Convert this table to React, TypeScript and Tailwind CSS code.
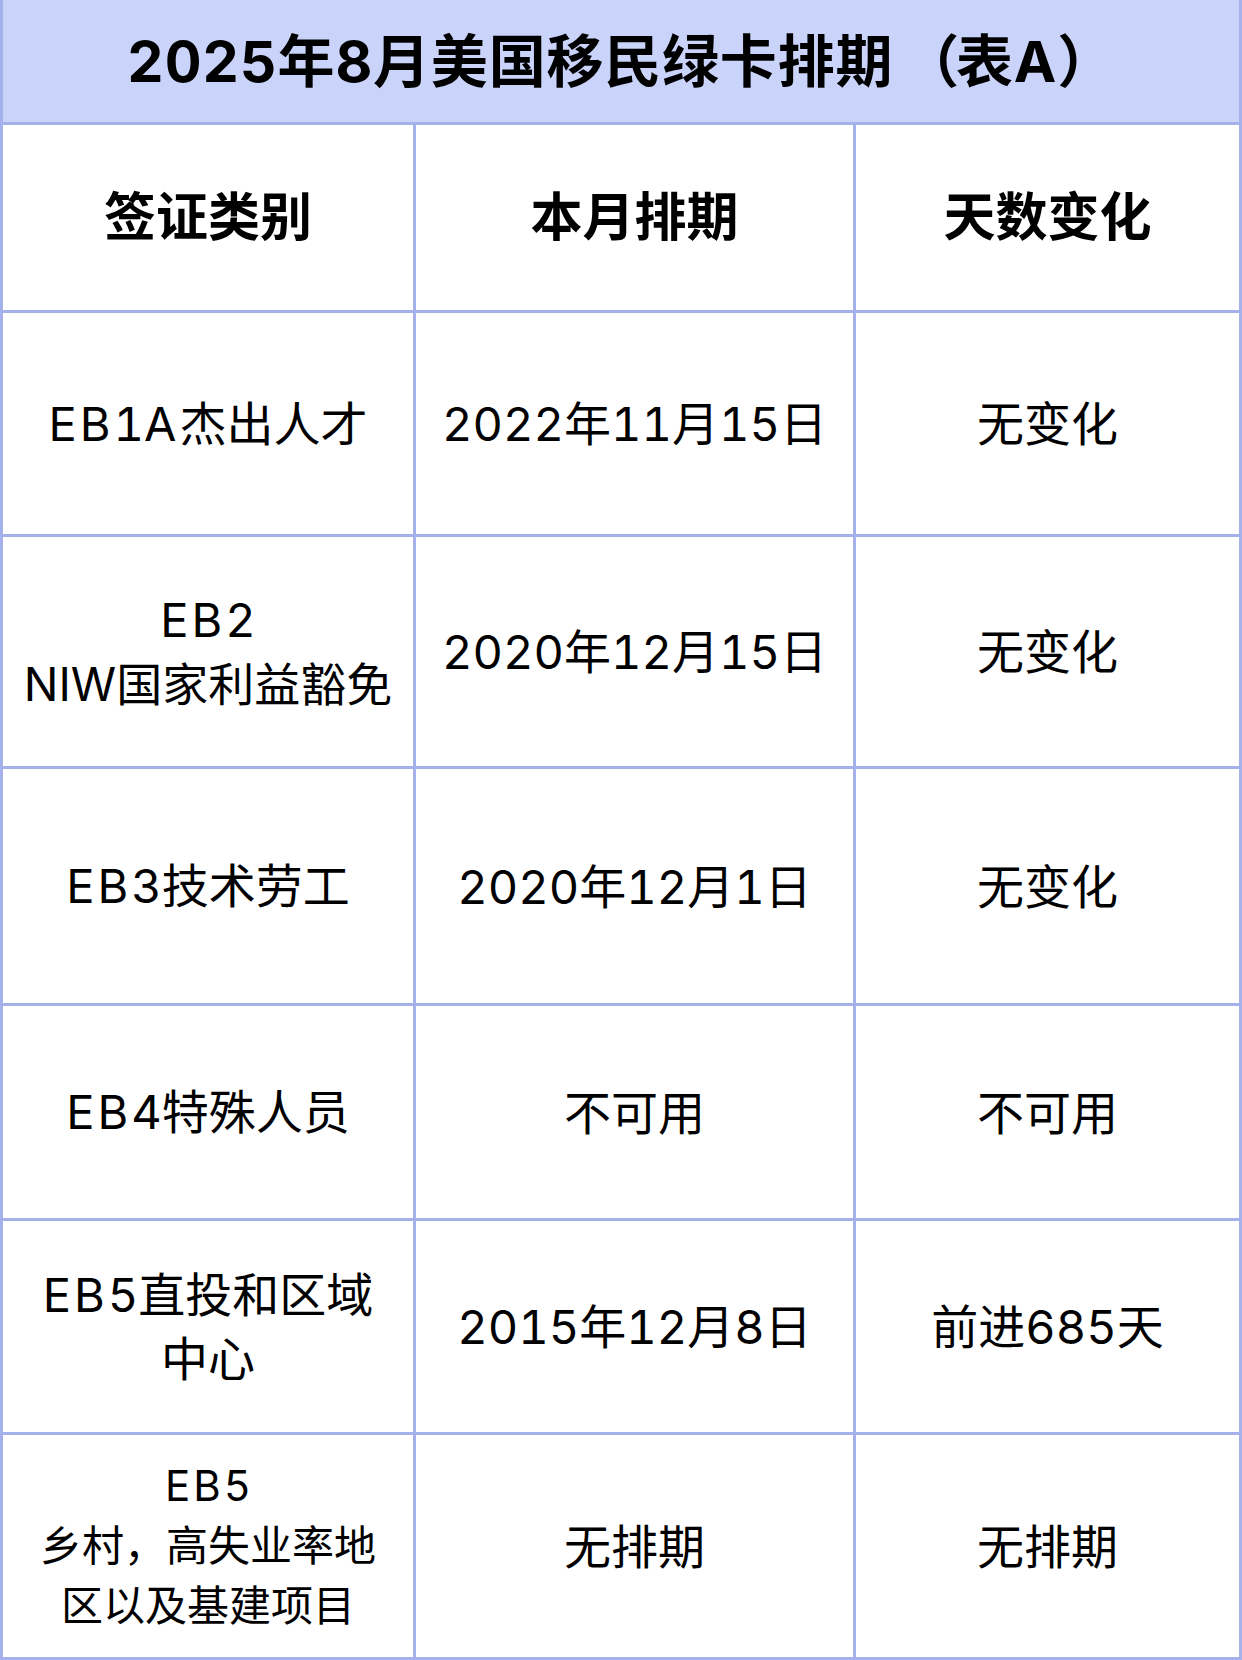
const rows: { name: string[]; date: string; change: string; h: string; small?: boolean }[] = [
  { name: ['EB1A杰出人才'], date: '2022年11月15日', change: '无变化', h: 'h-[221px]' },
  { name: ['EB2', 'NIW国家利益豁免'], date: '2020年12月15日', change: '无变化', h: 'h-[229px]' },
  { name: ['EB3技术劳工'], date: '2020年12月1日', change: '无变化', h: 'h-[234px]' },
  { name: ['EB4特殊人员'], date: '不可用', change: '不可用', h: 'h-[212px]' },
  { name: ['EB5直投和区域', '中心'], date: '2015年12月8日', change: '前进685天', h: 'h-[211px]' },
  { name: ['EB5', '乡村，高失业率地', '区以及基建项目'], date: '无排期', change: '无排期', h: 'h-[222px]', small: true },
];

const font = { fontFamily: 'Inter, "Noto Sans CJK SC", sans-serif' };

// latin letters sit a bit looser than the CJK glyphs
function Mixed({ text, loose = true }: { text: string; loose?: boolean }) {
  return (
    <>
      {text.split(/([A-Za-z]+)/).map((part, i) =>
        /[A-Za-z]/.test(part) && loose ? (
          <span key={i} className="tracking-[3px]">
            {part}
          </span>
        ) : (
          <span key={i}>{part}</span>
        )
      )}
    </>
  );
}

export default function App() {
  return (
    <div
      className="w-[1242px] h-[1660px] bg-[#a5b1ea] px-[3px] pb-[3px] grid grid-cols-[410px_437px_383px] gap-[3px] text-black tabular-nums"
      style={font}
    >
      <div className="col-span-3 h-[122px] bg-[#cad3fa] flex items-center justify-center">
        <h1 className="text-[57px] font-bold leading-none tracking-[0.8px]">
          2025年8月美国移民绿卡排期<span className="ml-[9px] -mr-[4px]">（</span>表A）
        </h1>
      </div>

      {['签证类别', '本月排期', '天数变化'].map((t) => (
        <div key={t} className="h-[185px] bg-white flex items-center justify-center">
          <span className="text-[52px] font-bold leading-none">{t}</span>
        </div>
      ))}

      {rows.map((r, i) => (
        <div key={i} className="contents">
          <div className={`${r.h} bg-white flex flex-col items-center justify-center text-center`}>
            {r.name.map((line) => {
              const niw = line.startsWith('NIW');
              return (
                <span
                  key={line}
                  className={
                    r.small ? 'text-[42px] leading-[60px]' : niw ? 'text-[46px] leading-[64px]' : 'text-[47px] leading-[64px]'
                  }
                >
                  <Mixed text={line} loose={!niw} />
                </span>
              );
            })}
          </div>
          <div className={`${r.h} bg-white flex items-center justify-center`}>
            <span className="text-[47px] leading-none">
              <Mixed text={r.date} />
            </span>
          </div>
          <div className={`${r.h} bg-white flex items-center justify-center`}>
            <span className="text-[47px] leading-none">
              <Mixed text={r.change} />
            </span>
          </div>
        </div>
      ))}
    </div>
  );
}
